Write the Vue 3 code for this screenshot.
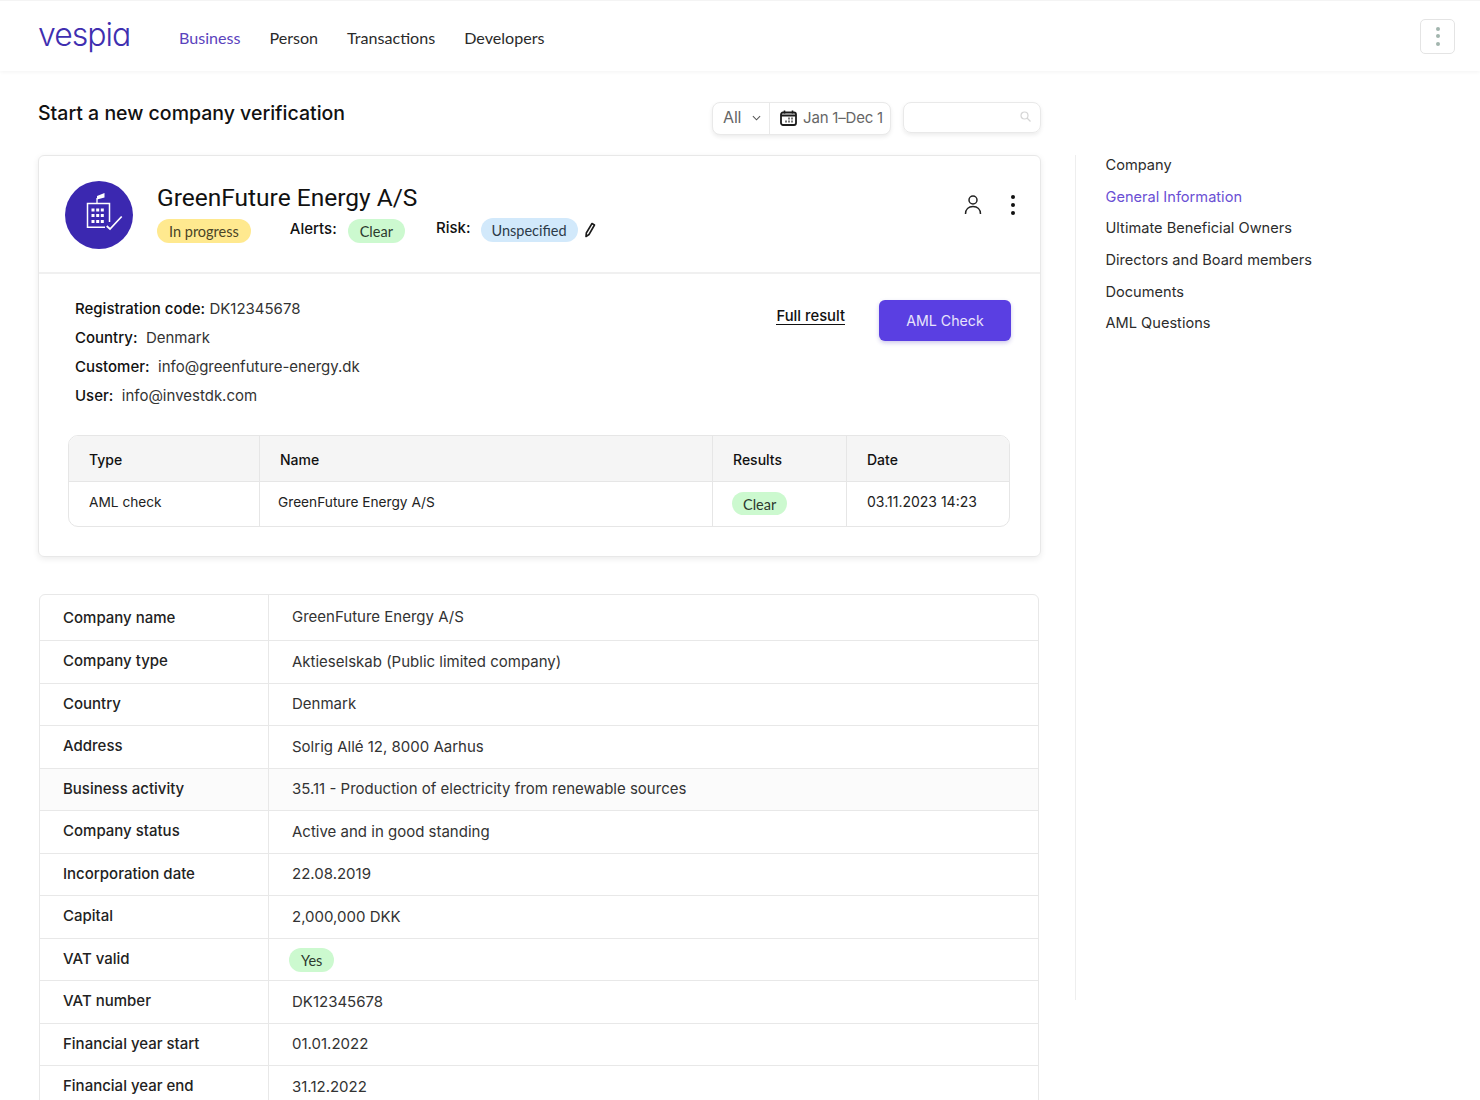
<template>
  <div class="page">
    <header class="topbar">
      <div class="logo">vespia</div>
      <nav class="nav">
        <a v-for="n in navItems" :key="n" :class="{ active: n === 'Business' }">{{ n }}</a>
      </nav>
      <button class="menu-btn" aria-label="Menu"><i></i><i></i><i></i></button>
    </header>

    <div class="layout">
      <main class="content">
        <div class="title-row">
          <h1>Start a new company verification</h1>
          <div class="filters">
            <div class="filter-group">
              <div class="filter-all">
                All
                <svg width="9" height="6" viewBox="0 0 10 6"><path d="M1 1l4 4 4-4" fill="none" stroke="#555" stroke-width="1.2" /></svg>
              </div>
              <div class="filter-date">
                <svg width="17" height="16" viewBox="0 0 17 16">
                  <rect x="1" y="2.500" width="15" height="12.500" rx="2" fill="none" stroke="#1b1b1b" stroke-width="1.800" />
                  <path d="M1 5.500h15" stroke="#1b1b1b" stroke-width="2" />
                  <path d="M4.500 0.500v3M12.500 0.500v3" stroke="#1b1b1b" stroke-width="1.600" />
                  <path d="M8 7.500h2v2H8zM11 7.500h2v2h-2zM5 10.500h2v2H5zM8 10.500h2v2H8zM11 10.500h2v2h-2z" fill="#777" />
                </svg>
                Jan 1–Dec 1
              </div>
            </div>
            <div class="search">
              <svg width="11" height="11" viewBox="0 0 11 11"><circle cx="4.500" cy="4.500" r="3.500" fill="none" stroke="#d5d5d5" stroke-width="1.200" /><path d="M7 7l3.500 3.500" stroke="#d5d5d5" stroke-width="1.200" /></svg>
            </div>
          </div>
        </div>

        <section class="card">
          <div class="card-head">
            <div class="avatar">
              <svg width="68" height="68" viewBox="0 0 68 68">
                <path d="M40 46.200H22.500V22.500h22v18.500" fill="none" stroke="#fff" stroke-width="1.500" />
                <path d="M32 22v-5" stroke="#fff" stroke-width="1.300" />
                <path d="M32 15l7.500-3v4.500l-7.500 2z" fill="#fff" />
                <path d="M26.500 27.500h3v3h-3zM31.200 27.500h3v3h-3zM35.800 27.500h3v3h-3zM26.500 33h3v3h-3zM31.200 33h3v3h-3zM35.800 33h3v3h-3zM26.500 39h3v3h-3zM31.200 39h3v3h-3zM35.800 39h3v3h-3z" fill="#fff" />
                <path d="M41.700 45l3.300 3 11.700-12.500" fill="none" stroke="#fff" stroke-width="1.700" />
              </svg>
            </div>
            <div class="head-text">
              <h2>GreenFuture Energy A/S</h2>
              <div class="status-row">
                <span class="pill yellow">In progress</span>
                <span class="status-label alerts">Alerts:</span>
                <span class="pill green">Clear</span>
                <span class="status-label risk">Risk:</span>
                <span class="pill blue">Unspecified</span>
                <svg class="pencil" width="12" height="16" viewBox="0 0 12 16">
                  <path d="M8 1.500l2.500 1.500-5.500 9.500-3 2 .3-3.500z" fill="none" stroke="#1b1b1b" stroke-width="1.600" stroke-linejoin="round" />
                </svg>
              </div>
            </div>
            <div class="head-actions">
              <svg width="20" height="22" viewBox="0 0 20 22">
                <circle cx="10" cy="6" r="4" fill="none" stroke="#222" stroke-width="1.500" />
                <path d="M2.500 20c0-4.500 3-7.500 7.500-7.500s7.500 3 7.500 7.500" fill="none" stroke="#222" stroke-width="1.500" />
              </svg>
              <div class="dots"><i></i><i></i><i></i></div>
            </div>
          </div>

          <div class="card-body">
            <div class="summary">
              <div class="facts">
                <p v-for="f in facts" :key="f.label"><b>{{ f.label }}</b> {{ f.value }}</p>
              </div>
              <a class="full-result">Full result</a>
              <button class="aml-btn">AML Check</button>
            </div>

            <div class="checks">
              <div class="checks-row checks-head">
                <div>Type</div><div>Name</div><div>Results</div><div>Date</div>
              </div>
              <div class="checks-row">
                <div>AML check</div>
                <div class="check-name">GreenFuture Energy A/S</div>
                <div><span class="pill green">Clear</span></div>
                <div class="check-date">03.11.2023 14:23</div>
              </div>
            </div>
          </div>
        </section>

        <section class="info">
          <div v-for="r in rows" :key="r.label" class="info-row" :class="{ shaded: r.shaded }">
            <div class="info-label">{{ r.label }}</div>
            <div class="info-value">
              <span v-if="r.pill" class="pill green">{{ r.value }}</span>
              <template v-else>{{ r.value }}</template>
            </div>
          </div>
        </section>
      </main>

      <aside class="side">
        <a v-for="s in sideItems" :key="s" :class="{ active: s === 'General Information' }">{{ s }}</a>
      </aside>
    </div>
  </div>
</template>

<script setup>
const navItems = ['Business', 'Person', 'Transactions', 'Developers']

const facts = [
  { label: 'Registration code:', value: 'DK12345678' },
  { label: 'Country:', value: ' Denmark' },
  { label: 'Customer:', value: ' info@greenfuture-energy.dk' },
  { label: 'User:', value: ' info@investdk.com' },
]

const rows = [
  { label: 'Company name', value: 'GreenFuture Energy A/S' },
  { label: 'Company type', value: 'Aktieselskab (Public limited company)' },
  { label: 'Country', value: 'Denmark' },
  { label: 'Address', value: 'Solrig Allé 12, 8000 Aarhus' },
  { label: 'Business activity', value: '35.11 - Production of electricity from renewable sources', shaded: true },
  { label: 'Company status', value: 'Active and in good standing' },
  { label: 'Incorporation date', value: '22.08.2019' },
  { label: 'Capital', value: '2,000,000 DKK' },
  { label: 'VAT valid', value: 'Yes', pill: true },
  { label: 'VAT number', value: 'DK12345678' },
  { label: 'Financial year start', value: '01.01.2022' },
  { label: 'Financial year end', value: '31.12.2022' },
]

const sideItems = [
  'Company',
  'General Information',
  'Ultimate Beneficial Owners',
  'Directors and Board members',
  'Documents',
  'AML Questions',
]
</script>

<style>
html, body { margin: 0; background: #fff; }
</style>

<style scoped>
.page {
  height: 1100px;
  overflow: hidden;
  font-family: Inter, "Liberation Sans", sans-serif;
  color: #1c1c1c;
  font-size: 15px;
}

.topbar {
  height: 70px;
  display: flex;
  align-items: center;
  padding: 0 25px 0 38px;
  border-top: 1px solid #f4f4f4;
  box-shadow: 0 1px 4px rgba(0, 0, 0, 0.05);
}
.logo {
  font-family: Inter, sans-serif;
  font-feature-settings: "cv11";
  font-weight: 350;
  font-size: 32px;
  letter-spacing: -1px;
  line-height: 40px;
  color: #3f2fb0;
  width: 141px;
  margin-top: -2px;
}
.nav { display: flex; gap: 29px; margin-top: 2px; font-family: Lato, sans-serif; font-size: 16.100px; }
.nav a { color: #2a2a2a; }
.nav a.active { color: #5a43bd; }
.menu-btn {
  margin-left: auto;
  width: 35px;
  height: 35px;
  background: #fff;
  border: 1px solid #e4e4e4;
  border-radius: 5px;
  display: flex;
  flex-direction: column;
  align-items: center;
  justify-content: center;
  gap: 3.500px;
  padding: 0;
}
.menu-btn i { width: 4px; height: 4px; border-radius: 50%; background: #a2b5ae; }

.layout { display: flex; padding-left: 38px; }
.content { width: 1003px; flex: none; }

.title-row { display: flex; justify-content: space-between; padding-top: 30px; height: 84px; box-sizing: border-box; }
h1 { margin: 0; font-size: 19.500px; font-weight: 500; line-height: 24px; color: #111; }
.filters { display: flex; gap: 12px; align-items: flex-start; padding-top: 1px; }
.filter-group {
  display: flex;
  height: 31px;
  background: #fff;
  border: 1px solid #e9e9e9;
  border-radius: 8px;
  box-shadow: 0 2px 4px rgba(0, 0, 0, 0.08);
  color: #666;
  font-size: 15px;
  letter-spacing: -0.200px;
  line-height: 27px;
}
.filter-all {
  width: 57px;
  padding: 0 0 2px 10px;
  box-sizing: border-box;
  display: flex;
  align-items: center;
  gap: 11px;
  font-size: 16px;
  border-right: 1px solid #e9e9e9;
}
.filter-date { display: flex; align-items: center; gap: 6px; padding: 0 7px 2px 10px; }
.search {
  width: 138px;
  height: 31px;
  border: 1px solid #e9e9e9;
  border-radius: 8px;
  box-shadow: 0 2px 4px rgba(0, 0, 0, 0.08);
  display: flex;
  justify-content: flex-end;
  align-items: center;
  padding: 0 9px 2px 0;
  box-sizing: border-box;
}

.card {
  height: 402px;
  box-sizing: border-box;
  border: 1px solid #e8e8e8;
  border-radius: 6px;
  box-shadow: 0 2px 6px rgba(0, 0, 0, 0.08);
}
.card-head {
  height: 118px;
  box-sizing: border-box;
  display: flex;
  align-items: flex-start;
  padding: 25px 25px 0 26px;
  border-bottom: 2px solid #f0f0f0;
}
.avatar { width: 68px; height: 68px; border-radius: 50%; background: #3b28b0; flex: none; }
.head-text { margin-left: 24px; flex: 1; }
h2 {
  margin: 1px 0 0;
  font-family: Roboto, sans-serif;
  font-size: 24.500px;
  font-weight: 400;
  line-height: 32px;
  color: #111;
}
.status-row { display: flex; align-items: flex-start; margin-top: 5px; font-size: 15px; }
.status-label { font-weight: 500; color: #111; }
.alerts { margin: 0 11px 0 39px; }
.risk { margin: -1px 11px 0 31px; }
.status-row .blue { margin-top: -1px; padding: 0 11px 0 10px; }
.pencil { margin: 3px 0 0 6px; }
.pill {
  display: inline-block;
  height: 24px;
  line-height: 25px;
  padding: 0 12px;
  border-radius: 12px;
  font-family: Lato, sans-serif;
  font-size: 14.500px;
  color: #2c3a2e;
  box-sizing: border-box;
}
.yellow { background: #ffe98f; color: #4a4426; }
.green { background: #ccf9cf; }
.blue { background: #d2e9fb; color: #2c3a48; }
.head-actions { display: flex; align-items: center; gap: 28px; padding-top: 13px; }
.dots { display: flex; flex-direction: column; gap: 4px; }
.dots i { width: 4px; height: 4px; border-radius: 50%; background: #111; }

.card-body { padding: 20px 30px 0 29px; }
.summary { display: flex; align-items: flex-start; padding-left: 7px; margin-right: -1px; height: 141px; }
.facts { flex: 1; }
.facts p { margin: 0; line-height: 29px; color: #333; white-space: pre-wrap; }
.facts b { font-weight: 500; color: #111; }
.full-result {
  margin: 14px 34px 0 0;
  font-weight: 500;
  font-size: 14.800px;
  line-height: 16px;
  color: #111;
  border-bottom: 1px solid #111;
}
.aml-btn {
  width: 132px;
  height: 41px;
  margin-top: 6px;
  border: none;
  border-radius: 6px;
  background: #5a3fe2;
  color: #e8e4fb;
  font: 400 14.200px Inter, sans-serif;
  box-shadow: 0 2px 4px rgba(60, 40, 180, 0.25);
}

.checks { border: 1px solid #e6e6e6; border-radius: 10px; overflow: hidden; font-size: 13.700px; }
.checks-row { display: grid; grid-template-columns: 190px 453px 134px 1fr; height: 44px; box-sizing: border-box; }
.checks-row > div { display: flex; align-items: center; padding: 0 0 5px 20px; border-left: 1px solid #e6e6e6; color: #222; }
.checks-row > div:first-child { border-left: none; }
.checks-row > div:nth-child(3) { padding-left: 19px; }
.checks-row > .check-name { padding-left: 18px; }
.checks-row > .check-date { font-size: 14px; }
.checks-head { height: 46px; background: #f5f5f5; border-bottom: 1px solid #e6e6e6; font-weight: 500; font-size: 14px; }
.checks-row.checks-head > div { padding: 1px 0 0 20px; color: #111; }
.checks-row .pill { height: 23px; line-height: 25px; margin-top: 4px; padding: 0 11px; }

.info {
  margin: 37px 2px 0 1px;
  border: 1px solid #e8e8e8;
  border-radius: 6px 6px 0 0;
}
.info-row {
  display: grid;
  grid-template-columns: 228px 1fr;
  height: 42.500px;
  border-top: 1px solid #e8e8e8;
  box-sizing: border-box;
}
.info-row:first-child { border-top: none; height: 45px; }
.info-row.shaded { background: #fbfbfb; }
.info-label { display: flex; align-items: center; padding: 0 0 2px 23px; font-weight: 500; color: #222; }
.info-row:first-child .info-label { padding-bottom: 0; }
.info-value { display: flex; align-items: center; padding: 0 0 1px 23px; border-left: 1px solid #e8e8e8; color: #333; }
.info-row:first-child .info-value { padding-bottom: 2px; }
.info-value .pill { margin: 3px 0 0 -3px; }

.side {
  margin-left: 34px;
  margin-top: 84px;
  height: 845px;
  border-left: 1px solid #eee;
  padding-left: 29.500px;
  display: flex;
  flex-direction: column;
  gap: 11.700px;
  line-height: 20px;
  color: #2c2c2c;
  font-size: 14.600px;
}
.side a.active { color: #6a4fd4; }
</style>
